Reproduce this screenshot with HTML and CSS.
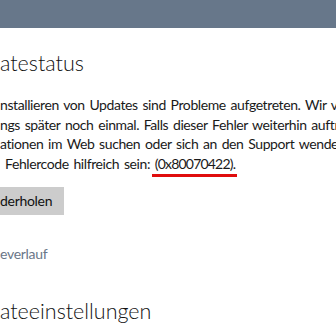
FILE: index.html
```html
<!DOCTYPE html>
<html lang="de">
<head>
<meta charset="utf-8">
<link rel="stylesheet" href="styles.css">
</head>
<body>
<header class="titlebar"></header>
<main class="content">
  <h1 class="heading">atestatus</h1>
  <div class="message">
    <div class="line">nstallieren von Updates sind Probleme aufgetreten. Wir versuchen es</div>
    <div class="line">ngs später noch einmal. Falls dieser Fehler weiterhin auftritt</div>
    <div class="line">ationen im Web suchen oder sich an den Support wenden</div>
    <div class="line last">Fehlercode hilfreich sein: <span class="code">(0x80070422).</span></div>
  </div>
  <div class="actions"><span class="retry">derholen</span></div>
  <a class="history" href="#">everlauf</a>
  <h2 class="heading second">ateeinstellungen</h2>
</main>
</body>
</html>
```

FILE: styles.css
```css
html, body {
  margin: 0;
  padding: 0;
  background: #ffffff;
  overflow: hidden;
}
body {
  width: 336px;
  height: 336px;
  font-family: "Lato", "Open Sans", sans-serif;
  color: #1a1a1a;
}
.titlebar {
  height: 28px;
  background: #67778a;
}
.content {
  display: flex;
  flex-direction: column;
  align-items: flex-start;
}
.heading {
  margin: 0;
  font-weight: 300;
  font-size: 21.5px;
  line-height: 30px;
  color: #111;
  white-space: nowrap;
}
.content > .heading:first-child {
  margin-top: 20px;
}
.message {
  margin-top: 17px;
  font-size: 14px;
  letter-spacing: -0.4px;
  word-spacing: 1.5px;
  line-height: 19.5px;
  width: 336px;
}
.line {
  white-space: nowrap;
  overflow: hidden;
}
.line.last {
  overflow: visible;
  padding-left: 5px;
}
.code {
  position: relative;
  letter-spacing: -0.8px;
}
.code::after {
  content: "";
  position: absolute;
  left: -3px;
  right: -2px;
  bottom: -5px;
  height: 3px;
  background: #e00d0d;
}
.actions {
  margin-top: 14px;
}
.retry {
  display: block;
  height: 28px;
  line-height: 27px;
  padding-right: 12px;
  background: #cccccc;
  font-size: 14px;
  letter-spacing: -0.3px;
  color: #111;
}
.history {
  margin-top: 29px;
  font-size: 14px;
  letter-spacing: -0.3px;
  line-height: 20px;
  color: #6a7688;
  text-decoration: none;
}
.second {
  margin-top: 32px;
}
```
